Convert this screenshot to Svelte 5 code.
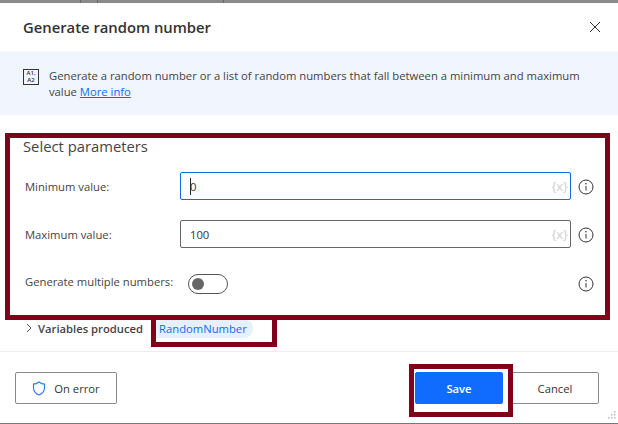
<script>
  const params = [
    { label: 'Minimum value:', value: '0', focused: true },
    { label: 'Maximum value:', value: '100', focused: false }
  ];
</script>

<div class="dialog">
  <div class="topstrip"><i></i><i></i><i></i></div>

  <header>
    <h1>Generate random number</h1>
    <svg class="close" width="14" height="14" viewBox="0 0 14 14" aria-label="Close">
      <path d="M2 2 L12 12 M12 2 L2 12" stroke="#333" stroke-width="1" fill="none" />
    </svg>
  </header>

  <section class="info">
    <div class="a1a2"><span>A1,</span><span>A2</span></div>
    <p>Generate a random number or a list of random numbers that fall between a minimum and maximum value <a href="#more">More info</a></p>
  </section>

  <section class="params">
    <h2>Select parameters</h2>
    {#each params as p}
      <div class="row">
        <span class="label">{p.label}</span>
        <div class="input" class:focused={p.focused}>
          {#if p.focused}<span class="caret"></span>{/if}
          <span class="val">{p.value}</span>
          <span class="x">{'{x}'}</span>
        </div>
        <svg class="i" width="16" height="16" viewBox="0 0 16 16">
          <circle cx="8" cy="8" r="7" fill="none" stroke="#333" />
          <path d="M8 7 V11.5" stroke="#333" />
          <circle cx="8" cy="4.8" r=".8" fill="#333" />
        </svg>
      </div>
    {/each}
    <div class="row toggle-row">
      <span class="label">Generate multiple numbers:</span>
      <div class="toggle"><b></b></div>
      <svg class="i" width="16" height="16" viewBox="0 0 16 16">
        <circle cx="8" cy="8" r="7" fill="none" stroke="#333" />
        <path d="M8 7 V11.5" stroke="#333" />
        <circle cx="8" cy="4.8" r=".8" fill="#333" />
      </svg>
    </div>
  </section>

  <section class="vars">
    <svg width="8" height="10" viewBox="0 0 8 10">
      <path d="M2 1 L6 5 L2 9" fill="none" stroke="#555" />
    </svg>
    <strong>Variables produced</strong>
    <span class="chip">RandomNumber</span>
  </section>

  <footer>
    <button class="btn onerror">
      <svg width="14" height="15" viewBox="0 0 14 15">
        <path d="M7 1 C5 2.6 3.2 3.2 1.5 3.2 V7 C1.5 10.4 3.6 12.6 7 14 C10.4 12.6 12.5 10.4 12.5 7 V3.2 C10.8 3.2 9 2.6 7 1 Z" fill="none" stroke="#2f7bf0" stroke-width="1.2" />
      </svg>
      On error
    </button>
    <div class="spacer"></div>
    <button class="btn save">Save</button>
    <button class="btn cancel">Cancel</button>
  </footer>
  <div class="bottomstrip"></div>

  <svg class="grip" width="12" height="12" viewBox="0 0 12 12">
    {#each [[9, 1], [6, 4], [9, 4], [3, 7], [6, 7], [9, 7]] as [x, y]}
      <rect {x} {y} width="1.5" height="1.5" fill="#b8bdd0" />
    {/each}
  </svg>

  <!-- annotation boxes drawn over the screenshot -->
  <div class="mark m1"></div>
  <div class="mark m2"></div>
  <div class="mark m3"></div>
</div>

<style>
  :global(body) {
    margin: 0;
    background: #fff;
  }

  .dialog {
    position: relative;
    width: 618px;
    height: 424px;
    overflow: hidden;
    display: flex;
    flex-direction: column;
    font-family: "Open Sans", "Noto Sans", sans-serif;
    font-size: 11.25px;
    color: #333;
  }

  .topstrip {
    height: 3px;
    background: #8a8a8a;
    display: flex;
    flex: none;
  }
  .topstrip i {
    width: 1px;
    background: #666;
  }
  .topstrip i:nth-child(1) { margin-left: 80px; }
  .topstrip i:nth-child(2) { margin-left: 16px; }
  .topstrip i:nth-child(3) { margin-left: 125px; }

  header {
    height: 48px;
    flex: none;
    display: flex;
    align-items: center;
    justify-content: space-between;
    padding: 0 16px 0 23px;
  }
  h1 {
    margin: 0;
    font-size: 14.8px;
    font-weight: 600;
    color: #333;
  }

  .info {
    height: 64px;
    flex: none;
    box-sizing: border-box;
    background: #f0f5fe;
    display: flex;
    gap: 10px;
    padding: 17px 23px 0;
  }
  .a1a2 {
    width: 16px;
    height: 16px;
    flex: none;
    margin-top: 1px;
    border: 1px solid #333;
    box-sizing: border-box;
    display: flex;
    flex-direction: column;
    align-items: center;
    font-size: 6px;
    line-height: 6.5px;
    font-weight: 600;
  }
  .info p {
    margin: 0;
    line-height: 16px;
    color: #444;
  }
  .info a {
    color: #0f6cf0;
  }

  .params {
    flex: none;
    height: 205px;
    box-sizing: border-box;
    padding: 21px 24px 0 25px;
    display: flex;
    flex-direction: column;
  }
  h2 {
    margin: 0 0 16px -2px;
    font-size: 14.8px;
    line-height: 20px;
    font-weight: 400;
    color: #444;
  }
  .row {
    display: flex;
    align-items: center;
    height: 28px;
    margin-bottom: 20px;
  }
  .label {
    width: 155px;
    flex: none;
    color: #444;
  }
  .input {
    box-sizing: border-box;
    width: 391px;
    height: 28px;
    border: 1px solid #666;
    border-radius: 2px;
    display: flex;
    align-items: center;
    padding: 0 2px 0 9px;
    position: relative;
  }
  .input.focused {
    border-color: #0f6cf0;
  }
  .caret {
    position: absolute;
    left: 9px;
    top: 5px;
    width: 1px;
    height: 17px;
    background: #222;
  }
  .val {
    flex: 1;
    color: #333;
  }
  .x {
    color: #d0d0d0;
    font-size: 13px;
  }
  .i {
    margin: 2px 0 0 7px;
    flex: none;
  }

  .toggle-row {
    margin-top: 2px;
    margin-bottom: 0;
  }
  .toggle-row .label {
    width: 163px;
    margin-top: -5px;
  }
  .toggle-row .i {
    margin: 0 0 0 350px;
  }
  .toggle {
    box-sizing: border-box;
    width: 40px;
    height: 20px;
    border: 1px solid #555;
    border-radius: 10px;
    display: flex;
    align-items: center;
    padding-left: 3px;
  }
  .toggle b {
    width: 12px;
    height: 12px;
    border-radius: 50%;
    background: #666;
  }

  .vars {
    flex: none;
    height: 31px;
    box-sizing: border-box;
    padding: 0 0 15px 25px;
    display: flex;
    align-items: center;
    gap: 5px;
  }
  .vars strong {
    font-weight: 600;
    color: #444;
  }
  .chip {
    margin-left: 8px;
    padding: 0 6px 0 3px;
    line-height: 19px;
    background: #e6f0ff;
    border-radius: 0 9px 9px 0;
    color: #0f6cf0;
  }

  footer {
    flex: 1;
    border-top: 1px solid #eee;
    display: flex;
    align-items: flex-start;
    padding: 20px 19px 0 15px;
  }
  .spacer {
    flex: 1;
  }
  .btn {
    box-sizing: border-box;
    height: 32px;
    border-radius: 2px;
    border: 1px solid #8a8a8a;
    background: #fff;
    font: inherit;
    color: #333;
    display: flex;
    align-items: center;
    justify-content: center;
    gap: 8px;
  }
  .onerror {
    width: 102px;
  }
  .save {
    width: 88px;
    background: #0f6cff;
    border-color: #0f6cff;
    color: #fff;
    font-weight: 600;
    margin-right: 8px;
  }
  .cancel {
    width: 88px;
  }

  .bottomstrip {
    height: 1px;
    flex: none;
    background: #777;
  }

  .grip {
    position: absolute;
    right: 1px;
    bottom: 2px;
  }

  .mark {
    position: absolute;
    box-sizing: border-box;
    border: 5px solid #83001a;
  }
  .m1 {
    left: 5px;
    top: 133px;
    width: 605px;
    height: 187px;
  }
  .m2 {
    left: 151px;
    top: 318px;
    width: 126px;
    height: 29px;
    border-top: 0;
  }
  .m3 {
    left: 409px;
    top: 364px;
    width: 104px;
    height: 53px;
  }
</style>
